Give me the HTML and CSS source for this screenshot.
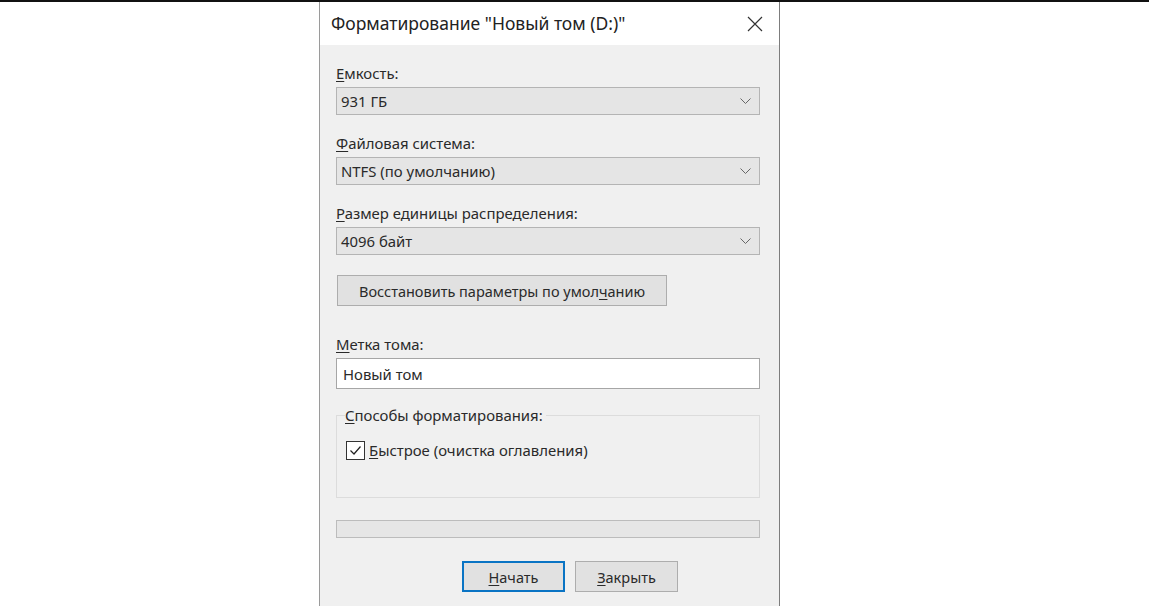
FILE: index.html
```html
<!DOCTYPE html>
<html lang="ru">
<head>
    <meta charset="UTF-8">
    <meta name="viewport" content="width=device-width, initial-scale=1.0">
    <title>Форматирование</title>
    <link rel="stylesheet" href="styles.css">
</head>
<body>
    <div class="top-line"></div>
    <div class="dialog">
        <div class="title-bar">
            <span class="title">Форматирование "Новый том (D:)"</span>
            <svg class="close-icon" width="16" height="16" viewBox="0 0 16 16">
                <path d="M1 1 L15 15 M15 1 L1 15" stroke="#333" stroke-width="1.2" fill="none"/>
            </svg>
        </div>

        <div class="content">
            <label class="field-label"><u>Е</u>мкость:</label>
            <div class="combo">
                <span>931 ГБ</span>
                <svg class="chevron" width="11" height="6" viewBox="0 0 11 6"><path d="M0.5 0.5 L5.5 5.5 L10.5 0.5" stroke="#666" fill="none"/></svg>
            </div>

            <label class="field-label"><u>Ф</u>айловая система:</label>
            <div class="combo">
                <span>NTFS (по умолчанию)</span>
                <svg class="chevron" width="11" height="6" viewBox="0 0 11 6"><path d="M0.5 0.5 L5.5 5.5 L10.5 0.5" stroke="#666" fill="none"/></svg>
            </div>

            <label class="field-label"><u>Р</u>азмер единицы распределения:</label>
            <div class="combo">
                <span>4096 байт</span>
                <svg class="chevron" width="11" height="6" viewBox="0 0 11 6"><path d="M0.5 0.5 L5.5 5.5 L10.5 0.5" stroke="#666" fill="none"/></svg>
            </div>

            <button class="btn btn-reset">Восстановить параметры по умол<u>ч</u>анию</button>

            <label class="field-label label-volume"><u>М</u>етка тома:</label>
            <div class="text-input">Новый том</div>

            <fieldset class="group">
                <legend><u>С</u>пособы форматирования:</legend>
                <div class="check-row">
                    <span class="checkbox">
                        <svg width="15" height="15" viewBox="0 0 15 15"><path d="M2.5 7.5 L6 11 L12.5 3.5" stroke="#222" stroke-width="1.2" fill="none"/></svg>
                    </span>
                    <span><u>Б</u>ыстрое (очистка оглавления)</span>
                </div>
            </fieldset>

            <div class="progress"></div>

            <div class="actions">
                <button class="btn btn-default"><u>Н</u>ачать</button>
                <button class="btn"><u>З</u>акрыть</button>
            </div>
        </div>
    </div>
</body>
</html>
```

FILE: styles.css
```css
* { margin: 0; padding: 0; box-sizing: border-box; }
html, body { height: 100%; }
body {
    background: #fff;
    font-family: 'Noto Sans', 'Open Sans', sans-serif;
    font-size: 14.9px;
    color: #2a2a2a;
    overflow: hidden;
}
u { text-decoration-thickness: 1px; text-underline-offset: 2px; }

.top-line { height: 2px; background: #111; }

.dialog {
    width: 461px;
    margin-left: 319px;
    min-height: calc(100vh - 2px);
    background: #f0f0f0;
    border-left: 1px solid #9a9a9a;
    border-right: 1px solid #7d7d7d;
}

.title-bar {
    height: 43px;
    background: #fff;
    display: flex;
    align-items: center;
    justify-content: space-between;
    padding: 0 16px 0 11px;
}
.title { font-size: 17.5px; color: #222; padding-bottom: 1px; }
.close-icon { margin-top: 1px; }

.content {
    padding: 18px 19px 0 16px;
    display: flex;
    flex-direction: column;
}

.field-label {
    display: block;
    height: 20px;
    line-height: 20px;
    margin-bottom: 4px;
}

.combo {
    height: 28px;
    background: #e5e5e5;
    border: 1px solid #b4b4b4;
    display: flex;
    align-items: center;
    justify-content: space-between;
    padding: 0 8px 0 4px;
    margin-bottom: 18px;
}

.btn {
    font-family: inherit;
    font-size: 14.5px;
    color: #2a2a2a;
    background: #e1e1e1;
    border: 1px solid #adadad;
    height: 31px;
    cursor: pointer;
}
.btn-reset {
    width: 330px;
    margin: 2px 0 0 1px;
}
.label-volume { margin-top: 28px; }

.text-input {
    height: 31px;
    background: #fff;
    border: 1px solid #a6a6a6;
    padding: 0 6px;
    display: flex;
    align-items: center;
}

.group {
    margin-top: 16px;
    height: 93px;
    border: 1px solid #dcdcdc;
    padding: 2px 8px 0 9px;
}
.group legend {
    padding: 0 3px 0 0;
    margin-left: -1px;
    line-height: 20px;
}
.check-row {
    display: flex;
    align-items: center;
    gap: 4px;
    margin-top: 13px;
}
.checkbox {
    width: 19px;
    height: 19px;
    border: 1px solid #333;
    background: #fff;
    display: flex;
    align-items: center;
    justify-content: center;
}

.progress {
    margin-top: 22px;
    height: 18px;
    background: #e6e6e6;
    border: 1px solid #bcbcbc;
}

.actions {
    display: flex;
    gap: 10px;
    margin: 23px 0 0 126px;
}
.actions .btn { width: 103px; height: 31px; }
.btn-default { border: 2px solid #0a74c4; }
```
